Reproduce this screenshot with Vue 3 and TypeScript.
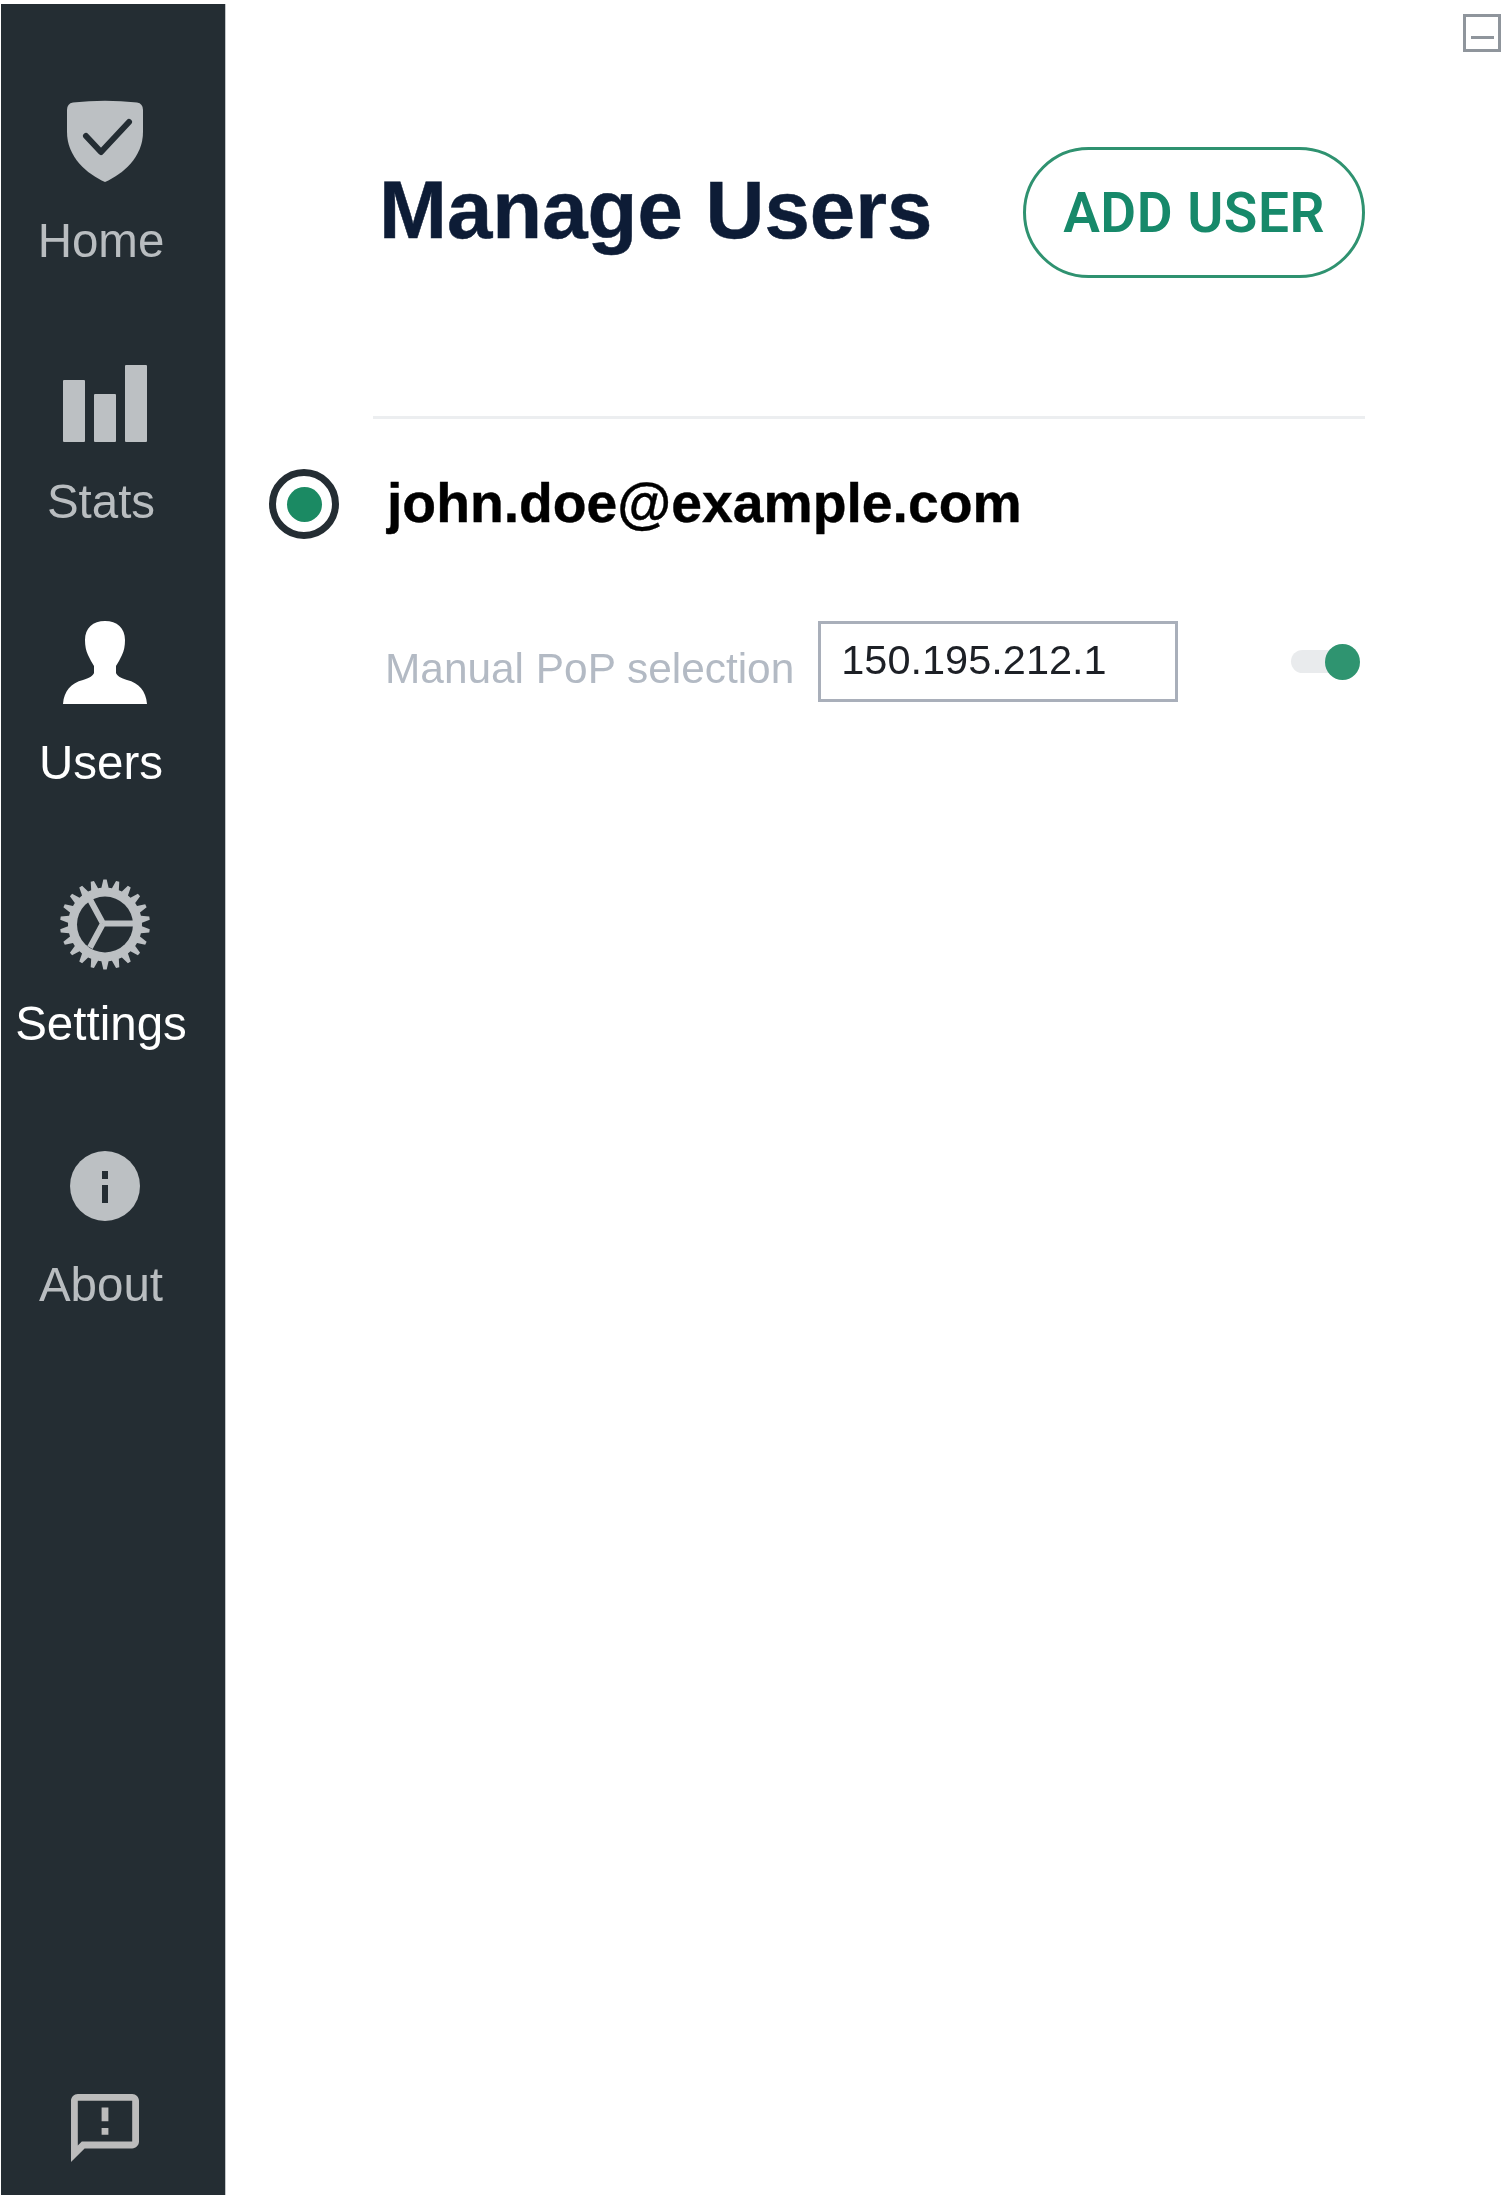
<script setup lang="ts">
const email: string = 'john.doe@example.com'
const ip: string = '150.195.212.1'

// Outline of the settings cog: 22 tapered teeth around the rim.
const teeth = 22
const rootRadius = 37
const tipRadius = 45
const point = (radius: number, angle: number): string =>
  `${(radius * Math.cos(angle)).toFixed(2)} ${(radius * Math.sin(angle)).toFixed(2)}`
const cogPath: string = Array.from({ length: teeth }, (_, i) => {
  const step = (Math.PI * 2) / teeth
  const a = i * step - Math.PI / 2
  return [
    point(rootRadius, a - step * 0.34),
    point(tipRadius, a - step * 0.13),
    point(tipRadius, a + step * 0.13),
    point(rootRadius, a + step * 0.34),
  ].join(' L')
})
  .map((segment, i) => (i === 0 ? 'M' : 'L') + segment)
  .join(' ') + ' Z'
</script>

<template>
  <div class="app">
    <nav class="sidebar">
      <a class="nav-item">
        <svg class="nav-icon" viewBox="0 0 224 100">
          <g transform="translate(66 9)">
            <path class="fill" d="M6 2.500Q38 -1 70 2.500Q76 3.500 76 10V32C76 57 56 74 38 82C20 74 0 57 0 32V10Q0 3.500 6 2.500Z" />
            <path d="M19 36L34 52L62 22" fill="none" stroke="#242d33" stroke-width="6" stroke-linecap="round" stroke-linejoin="round" />
          </g>
        </svg>
        <span class="nav-label">Home</span>
      </a>
      <a class="nav-item">
        <svg class="nav-icon" viewBox="0 0 224 100">
          <g class="fill" transform="translate(62 13)">
            <rect x="0" y="15" width="22" height="62" rx="1" />
            <rect x="31" y="29" width="22" height="48" rx="1" />
            <rect x="62" y="0" width="22" height="77" rx="1" />
          </g>
        </svg>
        <span class="nav-label">Stats</span>
      </a>
      <a class="nav-item active">
        <svg class="nav-icon" viewBox="0 0 224 100">
          <path transform="translate(62 8)" fill="#fff" d="M42 0C54 0 62 7 62 19C62 25 61 30 59 34C57 38 55 42 53 45L53 52C54 55 58 57 64 59C76 62 83 70 84 83H0C1 70 8 62 20 59C26 57 30 55 31 52L31 45C29 42 27 38 25 34C23 30 22 25 22 19C22 7 30 0 42 0Z" />
        </svg>
        <span class="nav-label">Users</span>
      </a>
      <a class="nav-item active">
        <svg class="nav-icon" viewBox="0 0 224 100">
          <g transform="translate(104 50.500)">
            <path class="fill" :d="cogPath" />
            <circle r="28" fill="#242d33" />
            <path d="M-2 -1H29M-2 -1L-15 -25M-2 -1L-15 23" fill="none" stroke="#bcc0c3" stroke-width="6" />
          </g>
        </svg>
        <span class="nav-label">Settings</span>
      </a>
      <a class="nav-item">
        <svg class="nav-icon" viewBox="0 0 224 100">
          <circle class="fill" cx="104" cy="51" r="35" />
          <rect x="101" y="36" width="6" height="8" fill="#242d33" />
          <rect x="101" y="50" width="6" height="18" fill="#242d33" />
        </svg>
        <span class="nav-label">About</span>
      </a>
      <div class="feedback">
        <svg class="feedback-icon" viewBox="2 2 20 20">
          <path fill="#bcbcbc" d="M20 2H4c-1.100 0-2 .9-2 2v18l4-4h14c1.100 0 2-.9 2-2V4c0-1.100-.9-2-2-2zm0 14H5.170L4 17.170V4h16v12zM11 12h2v2h-2zm0-6h2v4h-2z" />
        </svg>
      </div>
    </nav>

    <main class="content">
      <div class="topbar">
        <span class="window-btn"><span class="window-line"></span></span>
      </div>
      <header class="header">
        <h1 class="title">Manage Users</h1>
        <button class="add-btn" type="button">ADD USER</button>
      </header>
      <div class="divider"></div>
      <section class="user">
        <div class="user-row">
          <span class="radio"><span class="radio-dot"></span></span>
          <span class="email">{{ email }}</span>
        </div>
        <div class="pop-row">
          <span class="pop-label">Manual PoP selection</span>
          <span class="ip-box">{{ ip }}</span>
          <span class="toggle"><span class="toggle-knob"></span></span>
        </div>
      </section>
    </main>
  </div>
</template>

<style>
html, body { margin: 0; background: #fff; }
</style>

<style scoped>
.app {
  display: flex;
  box-sizing: border-box;
  width: 1507px;
  height: 2195px;
  padding: 4px 0 0 1px;
  background: #fff;
  font-family: "Liberation Sans", Arial, sans-serif;
  overflow: hidden;
  filter: blur(0.6px);
}
.sidebar {
  display: flex;
  flex-direction: column;
  flex: none;
  gap: 61px;
  box-sizing: border-box;
  width: 225px;
  padding-top: 87px;
  background: #242d33;
  border-right: 1px solid #c3c6c9;
}
.nav-item {
  display: block;
  height: 200px;
  color: #b9bdc0;
}
.nav-item.active { color: #fff; }
.nav-icon {
  display: block;
  width: 224px;
  height: 100px;
}
.fill { fill: #bcc0c3; }
.nav-label {
  display: block;
  padding-right: 24px;
  font-size: 47.500px;
  line-height: 100px;
  text-align: center;
}
.feedback {
  display: flex;
  justify-content: center;
  margin-top: auto;
  padding: 0 16px 33px 0;
}
.feedback-icon {
  display: block;
  width: 68px;
  height: 68px;
}
.content {
  flex: 1;
  min-width: 0;
}
.topbar {
  display: flex;
  justify-content: flex-end;
  padding: 10px 6px 0 0;
}
.window-btn {
  display: flex;
  align-items: flex-end;
  justify-content: center;
  box-sizing: border-box;
  width: 38px;
  height: 38px;
  padding-bottom: 10px;
  border: 3px solid #8f959c;
}
.window-line {
  width: 23px;
  height: 3px;
  background: #8f959c;
}
.header {
  display: flex;
  align-items: center;
  justify-content: space-between;
  height: 129px;
  margin: 96px 142px 0 153px;
}
.title {
  margin: -5px 0 0;
  color: #0d1c36;
  font-size: 81.600px;
  font-weight: 700;
  line-height: 1;
  -webkit-text-stroke: 0.5px #0d1c36;
}
.add-btn {
  box-sizing: border-box;
  width: 342px;
  height: 131px;
  padding: 0;
  border: 3.500px solid #2f9270;
  border-radius: 66px;
  background: #fff;
  color: #17896a;
  font-family: Roboto, "Liberation Sans", sans-serif;
  font-size: 55px;
  font-weight: 600;
  letter-spacing: 0.500px;
}
.divider {
  height: 3px;
  margin: 139px 142px 0 147px;
  background: #eceef0;
}
.user {
  padding-left: 43px;
  margin-right: 142px;
}
.user-row {
  display: flex;
  align-items: center;
  gap: 48px;
  margin-top: 50px;
}
.radio {
  display: flex;
  align-items: center;
  justify-content: center;
  flex: none;
  box-sizing: border-box;
  width: 70px;
  height: 70px;
  border: 7px solid #242d33;
  border-radius: 50%;
}
.radio-dot {
  width: 35px;
  height: 35px;
  border-radius: 50%;
  background: #1b8a63;
}
.email {
  margin-top: -2px;
  color: #000;
  font-size: 55.300px;
  font-weight: 700;
  line-height: 70px;
  -webkit-text-stroke: 0.4px #000;
}
.pop-row {
  display: flex;
  align-items: center;
  height: 81px;
  margin-top: 82px;
  padding-left: 116px;
}
.pop-label {
  color: #b3bac4;
  font-size: 42.400px;
  line-height: 1;
  margin-top: 16px;
}
.ip-box {
  box-sizing: border-box;
  width: 360px;
  height: 81px;
  margin-left: 24px;
  padding-left: 20px;
  border: 3px solid #a9afba;
  color: #1d2026;
  font-size: 41.500px;
  line-height: 72px;
}
.toggle {
  position: relative;
  width: 60px;
  height: 23px;
  margin-left: auto;
  margin-right: 14px;
  border-radius: 12px;
  background: #e9ebed;
}
.toggle-knob {
  position: absolute;
  top: -6px;
  right: -9px;
  width: 35px;
  height: 36px;
  border-radius: 50%;
  background: #2f9470;
}
</style>
